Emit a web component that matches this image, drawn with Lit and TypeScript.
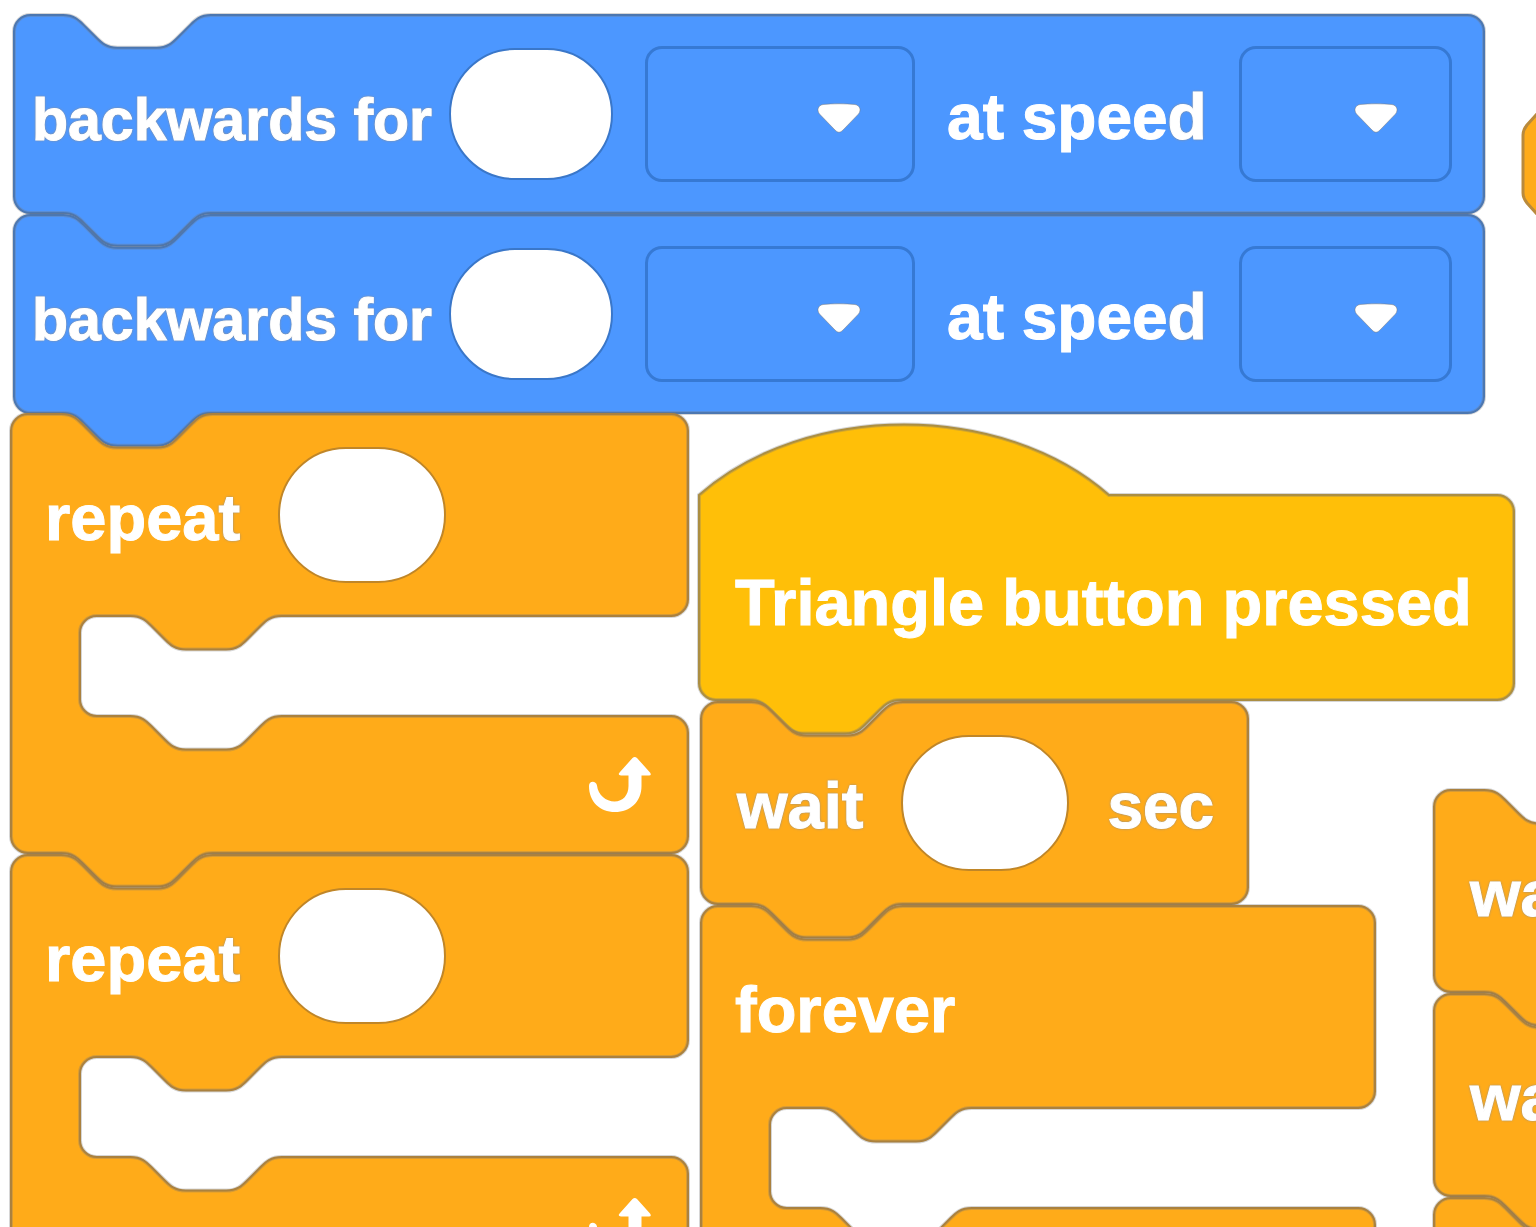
import { LitElement, html, svg, css, nothing } from "lit";
import { customElement, property } from "lit/decorators.js";

type Tone = "motion" | "control" | "event";
type Kind = "stack" | "hat" | "loop";

interface Run {
  text: string;
  edged?: boolean;
}

type Part =
  | { type: "label"; runs: Run[]; size: "small" | "medium" | "large" }
  | { type: "number"; name: string }
  | { type: "menu"; name: string; wide?: boolean };

interface Block {
  kind: Kind;
  tone: Tone;
  width: number;
  parts: Part[];
  arrow?: boolean;
}

interface Stack {
  x: number;
  y: number;
  blocks: Block[];
}

const ROW: Record<Tone, number> = { motion: 198, control: 202, event: 205 };
const MOUTH = 100;
const FOOT = 137;

/* Connector outline in grid units: a notch is 36 units wide and 8 deep. */
const notch = (k: number, dir: 1 | -1) => {
  const x = (n: number) => n * k * dir;
  const y = (n: number) => n * k;
  return (
    `c${x(2.6)},0 ${x(3.8)},${y(1.2)} ${x(5)},${y(2.4)} l${x(3.2)},${y(3.2)} ` +
    `c${x(1.2)},${y(1.2)} ${x(2.4)},${y(2.4)} ${x(5)},${y(2.4)} h${x(9.6)} ` +
    `c${x(2.6)},0 ${x(3.8)},${y(-1.2)} ${x(5)},${y(-2.4)} l${x(3.2)},${y(-3.2)} ` +
    `c${x(1.2)},${y(-1.2)} ${x(2.4)},${y(-2.4)} ${x(5)},${y(-2.4)}`
  );
};

function outline(block: Block): string {
  const k = block.tone === "motion" ? 4.1 : 4.2;
  const w = block.width;
  const row = ROW[block.tone];
  const r = 4 * k;
  const lead = 12 * k;
  const end = 48 * k;
  const corner = (dx: number, dy: number, sweep = 1) => `a${r},${r} 0 0 ${sweep} ${dx},${dy}`;

  const top =
    block.kind === "hat"
      ? `M0,0 c107,-94 303,-94 410,0 H${w - r} ${corner(r, r)}`
      : `M0,${r} ${corner(r, -r)} H${lead} ${notch(k, 1)} H${w - r} ${corner(r, r)}`;
  const bottom = (y: number) =>
    `V${y - r} ${corner(-r, r)} H${end} ${notch(k, -1)} H${r} ${corner(-r, -r)} Z`;

  if (block.kind !== "loop") return `${top} ${bottom(row)}`;

  const inner = 69;
  return (
    `${top} V${row - r} ${corner(-r, r)} H${inner + end} ${notch(k, -1)} H${inner + r} ` +
    `${corner(-r, r, 0)} V${row + MOUTH - r} ${corner(r, r, 0)} H${inner + lead} ${notch(k, 1)} ` +
    `H${w - r} ${corner(r, r)} ${bottom(row + MOUTH + FOOT)}`
  );
}

const label = (size: "small" | "medium" | "large", ...runs: Run[]): Part => ({ type: "label", size, runs });

const backwards: Block = {
  kind: "stack",
  tone: "motion",
  width: 1470,
  parts: [
    label("small", { text: "backwards for", edged: true }),
    { type: "number", name: "Distance" },
    { type: "menu", name: "Unit", wide: true },
    label("medium", { text: "at spee" }, { text: "d", edged: true }),
    { type: "menu", name: "Speed" },
  ],
};

const repeat: Block = {
  kind: "loop",
  tone: "control",
  width: 677,
  arrow: true,
  parts: [
    label("large", { text: "repea" }, { text: "t", edged: true }),
    { type: "number", name: "Times" },
  ],
};

const wait: Block = {
  kind: "stack",
  tone: "control",
  width: 547,
  parts: [
    label("large", { text: "wait", edged: true }),
    { type: "number", name: "Seconds" },
    label("medium", { text: "sec", edged: true }),
  ],
};

const pressed: Block = {
  kind: "hat",
  tone: "event",
  width: 815,
  parts: [label("large", { text: "Triangle button pressed" })],
};

const forever: Block = {
  kind: "loop",
  tone: "control",
  width: 674,
  arrow: true,
  parts: [label("large", { text: "forever" })],
};

const STACKS: Stack[] = [
  { x: 14, y: 15, blocks: [backwards, backwards] },
  { x: 11, y: 414, blocks: [repeat, repeat] },
  { x: 699, y: 495, blocks: [pressed] },
  { x: 701, y: 702, blocks: [wait, forever] },
  { x: 1434, y: 790, blocks: [wait, wait, wait] },
];

@customElement("code-block")
class CodeBlock extends LitElement {
  @property({ attribute: false }) block!: Block;

  static styles = css`
    :host {
      display: block;
    }
    .block {
      position: relative;
      display: flex;
      flex-direction: column;
    }
    .shape {
      position: absolute;
      inset: 0;
      width: 100%;
      height: 100%;
      overflow: visible;
      pointer-events: none;
    }
    .halo {
      fill: none;
      stroke: #777;
      stroke-opacity: 0.3;
      stroke-width: 4;
    }
    .motion {
      --fill: #4c97ff;
      --edge: #3a77c9;
    }
    .control {
      --fill: #ffab19;
      --edge: #c08628;
    }
    .event {
      --fill: #ffbf08;
      --edge: #c2982c;
    }
    .body {
      fill: var(--fill);
      stroke: var(--edge);
      stroke-width: 2;
    }
    .row {
      position: relative;
      display: flex;
      align-items: center;
      box-sizing: border-box;
      padding-left: 36px;
      gap: 38px;
      height: 202px;
    }
    .motion .row {
      height: 198px;
      padding-left: 18px;
      gap: 32px;
    }
    .event .row {
      height: 205px;
    }
    .loop .row {
      padding-left: 34px;
    }
    .label {
      font-family: "Liberation Sans", Arial, Helvetica, sans-serif;
      font-weight: 700;
      line-height: 80px;
      padding-top: 6px;
      color: #fff;
      white-space: nowrap;
      -webkit-text-stroke: 1px #fff;
    }
    .small {
      font-size: 59px;
      padding-top: 12px;
      margin-right: -15px;
    }
    .medium {
      font-size: 64px;
    }
    .large {
      font-size: 65px;
    }
    .event .label {
      padding-top: 10px;
    }
    .edged {
      text-shadow: 0 0 2px #888, 0 0 3px #999;
    }
    .number {
      box-sizing: border-box;
      width: 168px;
      height: 136px;
      padding: 0 32px;
      border: 2px solid var(--edge);
      border-radius: 68px;
      background: #fff;
      font: 56px "Liberation Sans", Arial, sans-serif;
      text-align: center;
      outline: none;
    }
    .motion .number {
      width: 164px;
      height: 132px;
    }
    .menu {
      display: grid;
      align-items: center;
      width: 213px;
      height: 136px;
    }
    .wide {
      width: 270px;
    }
    .select,
    .caret {
      grid-area: 1 / 1;
    }
    .select {
      appearance: none;
      box-sizing: border-box;
      width: 100%;
      height: 100%;
      margin: 0;
      padding: 0 96px 0 24px;
      border: 3px solid #3679d4;
      border-radius: 17px;
      background: transparent;
      color: #fff;
      font: 56px "Liberation Sans", Arial, sans-serif;
      outline: none;
    }
    .caret {
      justify-self: end;
      width: 44px;
      height: 30px;
      margin: 8px 54px 0 0;
      overflow: visible;
      pointer-events: none;
    }
    .caret path {
      fill: #fff;
      stroke: #777;
      stroke-opacity: 0.5;
    }
    .mouth {
      height: 100px;
    }
    .foot {
      position: relative;
      display: flex;
      align-items: center;
      justify-content: flex-end;
      height: 137px;
      padding-right: 37px;
    }
    .turn {
      width: 62px;
      height: 55px;
      fill: #fff;
      overflow: visible;
    }
  `;

  private part(p: Part) {
    if (p.type === "label") {
      return html`<span class="label ${p.size}"
        >${p.runs.map((r) => html`<span class=${r.edged ? "edged" : "plain"}>${r.text}</span>`)}</span
      >`;
    }
    if (p.type === "number") {
      return html`<input class="number" type="text" inputmode="decimal" aria-label=${p.name} />`;
    }
    return html`<span class="menu ${p.wide ? "wide" : ""}">
      <select class="select" aria-label=${p.name}>
        <option></option>
      </select>
      <svg class="caret" viewBox="0 0 44 30" aria-hidden="true">
        <path
          d="M6,1.5 C15,.5 29,.5 38,1.5 C43,2.500 44.500,7 41.500,11 L26,27 C23,30 21,30 18,27 L2.500,11 C-.5,7 1,2.500 6,1.500 Z"
        />
      </svg>
    </span>`;
  }

  render() {
    const b = this.block;
    const d = outline(b);
    return html`<div class="block ${b.tone} ${b.kind}" style="width:${b.width}px">
      <svg class="shape" aria-hidden="true">
        ${svg`<path class="body" d=${d} /><path class="halo" d=${d} />`}
      </svg>
      <div class="row">${b.parts.map((p) => this.part(p))}</div>
      ${b.kind === "loop"
        ? html`<div class="mouth"></div>
            <div class="foot">
              ${b.arrow
                ? html`<svg class="turn" viewBox="0 0 62 55" aria-hidden="true">
                    <path
                      d="M43.500,1 Q45.700,-1 48,1 L61,15.500 Q63,18.500 60,18.500 H52.500 V29 C52.500,45 41,55 26,55 C11,55 0,45 0,29 C0,23.500 7,23.500 8,28.500 C9,38 17,44.500 25.500,44.500 C34,44.500 39.500,38 39.500,29 V18.500 H32 Q28,18 31,15 Z"
                    />
                  </svg>`
                : nothing}
            </div>`
        : nothing}
    </div>`;
  }
}

@customElement("app-root")
class AppRoot extends LitElement {
  static styles = css`
    :host {
      display: block;
    }
    .workspace {
      position: relative;
      width: 100%;
      height: 100vh;
      overflow: hidden;
      background: #fff;
    }
    .stack {
      position: absolute;
      display: flex;
      flex-direction: column;
      gap: 2px;
    }
    .reporter {
      position: absolute;
      left: 1522px;
      top: 98px;
      width: 160px;
      height: 132px;
      overflow: visible;
      fill: #ffab19;
      stroke: #b98a3c;
      stroke-width: 3;
    }
  `;

  render() {
    return html`<main class="workspace">
      ${STACKS.map(
        (s) => html`<section class="stack" style="left:${s.x}px;top:${s.y}px">
          ${s.blocks.map((b) => html`<code-block .block=${b}></code-block>`)}
        </section>`
      )}
      <svg class="reporter" viewBox="0 0 160 132" aria-hidden="true">
        <path d="M1,37 Q1,32 5,27 L24,6 Q28,0 36,0 H160 V132 H36 Q28,132 24,126 L5,105 Q1,100 1,95 Z" />
      </svg>
    </main>`;
  }
}
